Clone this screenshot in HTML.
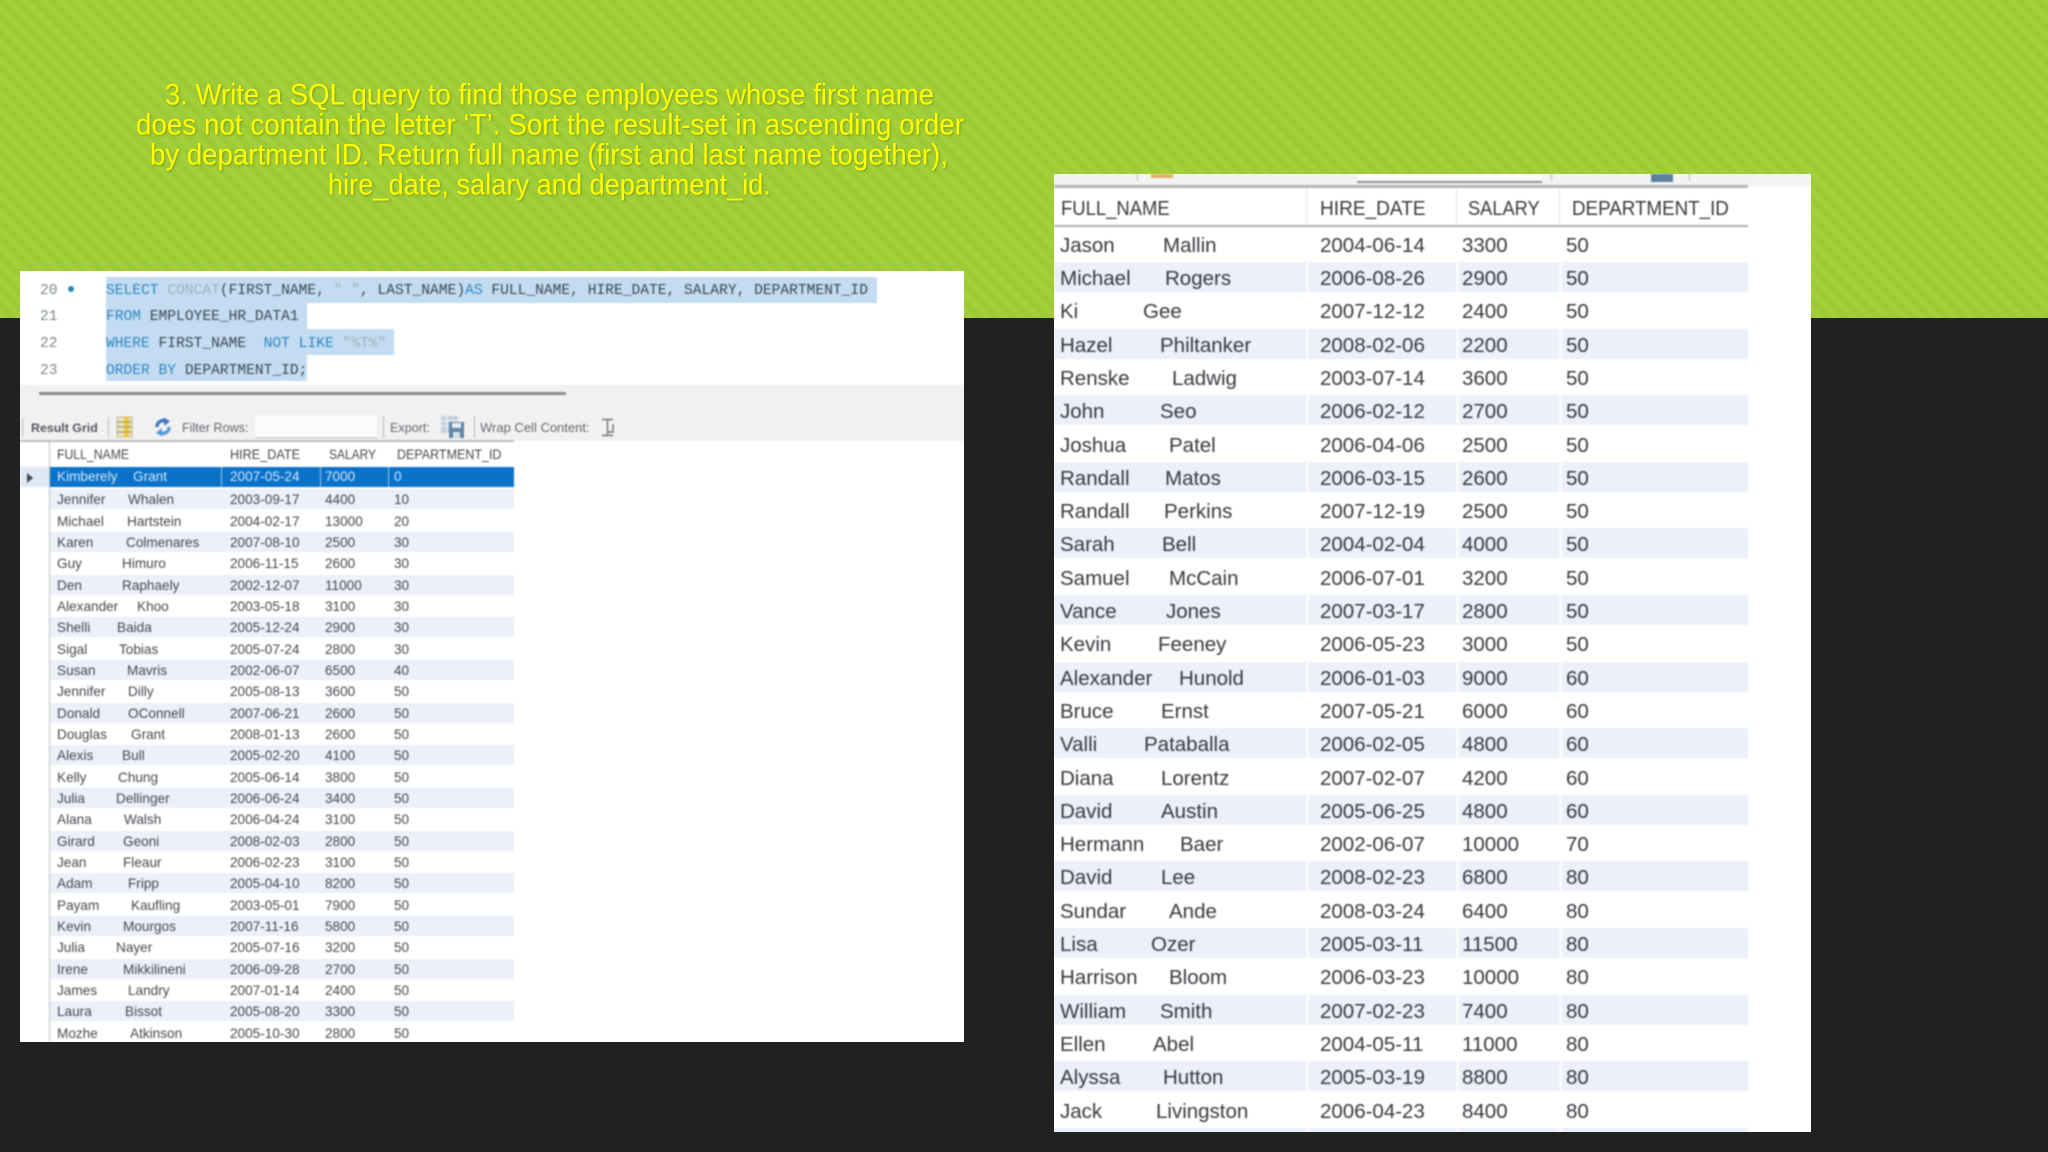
<!DOCTYPE html>
<html lang="en">
<head>
<meta charset="utf-8">
<title>SQL query</title>
<style>
html,body{margin:0;padding:0;width:2048px;height:1152px;overflow:hidden;background:#212121}
body{position:relative;font-family:"Liberation Sans",sans-serif}
.abs,.g{position:absolute}
#green{left:0;top:0;width:2048px;height:318px;background:repeating-linear-gradient(45deg,#a3cf3b 0,#a3cf3b 6px,#9dcb36 6px,#9dcb36 12px)}
#title{left:0;top:0;filter:drop-shadow(1px 1px 1px rgba(70,80,0,.4))}
#title text{font-family:"Liberation Sans",sans-serif;font-size:30px;fill:#ffff00}
.panel{position:absolute;background:#fff;overflow:hidden}
#pl{left:20px;top:271px;width:944px;height:771px}
#pr{left:1054px;top:174px;width:757px;height:958px}
.inner{position:absolute;left:0;top:0;width:2048px;height:1152px;filter:blur(.7px)}
#pl .inner{left:-20px;top:-271px}
#pr .inner{left:-1054px;top:-174px}
.hl{position:absolute;background:#c3dcf2}
.code{position:absolute;left:106px;font:14.6px/26px "Liberation Mono",monospace;color:#3d4750;white-space:pre}
.code b{font-weight:normal;color:#2f86c2}
.code i{font-style:normal;color:#9fb2bd}
.num{position:absolute;left:40px;font:14.6px/26px "Liberation Mono",monospace;color:#7c8488}
.tb{position:absolute;font-size:12.6px;line-height:16px;color:#62676d;white-space:nowrap}
.sep{position:absolute;width:1px;background:#b8b8b8}
.L,.R{position:absolute;left:0;width:2048px}
.L p,.R p{position:relative;margin:0;width:2048px}
.L span,.R span{position:absolute;top:0;white-space:nowrap}
.L{top:468px;font-size:13.6px;color:#44484e}
.L p{height:21.33px;line-height:21.33px;background:linear-gradient(#ebf0f9,#ebf0f9) 50px 0/464px 20px no-repeat}
.L p:nth-child(odd){background:none}
.L p.sel{background:#0b72c9;width:464px;left:50px;height:20px;line-height:20px;margin-top:-1px;margin-bottom:2.33px;color:#d3e6f8}
.L .d{left:230px}.L .s{left:325px}.L .e{left:394px}
.R{top:228.8px;font-size:20.5px;color:#36393e}
.R p{height:33.3px;line-height:33.3px;background:linear-gradient(#ebf0f9,#ebf0f9) 1054px 0/694px 30px no-repeat}
.R p:nth-child(odd){background:none}
.R .n{left:1060px}.R .d{left:1320px}.R .s{left:1462px}.R .e{left:1566px}
.L .n{left:57px}
.vw{position:absolute;background:#fff}
.hd{position:absolute;white-space:nowrap;transform-origin:0 0}
.hl-h{font-size:13.6px;color:#44484e;top:447px}
.hr-h{font-size:20.5px;color:#36393e;top:197px}
</style>
</head>
<body>
<div class="abs" id="green"></div>
<svg class="abs" id="title" width="1040" height="230" viewBox="0 0 1040 230">
<text x="165" y="104.5" textLength="769" lengthAdjust="spacingAndGlyphs">3. Write a SQL query to find those employees whose first name</text>
<text x="136" y="134.5" textLength="828" lengthAdjust="spacingAndGlyphs">does not contain the letter ‘T’. Sort the result-set in ascending order</text>
<text x="150" y="164.5" textLength="798" lengthAdjust="spacingAndGlyphs">by department ID. Return full name (first and last name together),</text>
<text x="328" y="194.5" textLength="443" lengthAdjust="spacingAndGlyphs">hire_date, salary and department_id.</text>
</svg>

<div class="panel" id="pl"><div class="inner">
  <div class="hl" style="left:106px;top:277px;width:771px;height:26px"></div>
  <div class="hl" style="left:106px;top:303px;width:201px;height:26px"></div>
  <div class="hl" style="left:106px;top:329px;width:288px;height:26px"></div>
  <div class="hl" style="left:106px;top:355px;width:201px;height:26px"></div>
  <div class="num" style="top:278px">20</div>
  <div class="abs" style="left:68px;top:286px;width:6px;height:6px;border-radius:50%;background:#2f7fb8"></div>
  <div class="num" style="top:304px">21</div>
  <div class="num" style="top:331px">22</div>
  <div class="num" style="top:358px">23</div>
  <div class="code" style="top:278px"><b>SELECT</b> <i>CONCAT</i>(FIRST_NAME, <i>" "</i>, LAST_NAME)<b>AS</b> FULL_NAME, HIRE_DATE, SALARY, DEPARTMENT_ID</div>
  <div class="code" style="top:304px"><b>FROM</b> EMPLOYEE_HR_DATA1</div>
  <div class="code" style="top:331px"><b>WHERE</b> FIRST_NAME  <b>NOT LIKE</b> <i>"%T%"</i></div>
  <div class="code" style="top:358px"><b>ORDER BY</b> DEPARTMENT_ID;</div>

  <div class="abs" style="left:20px;top:385px;width:944px;height:56px;background:#f1f1f1"></div>
  <div class="abs" style="left:39px;top:392px;width:527px;height:3px;background:#8d8d8d"></div>
  <div class="sep" style="left:22px;top:417px;height:20px"></div>
  <div class="tb" style="left:31px;top:420px;font-weight:bold;color:#53575c;font-size:12.4px">Result Grid</div>
  <div class="sep" style="left:108px;top:417px;height:20px"></div>
  <svg class="abs" style="left:116px;top:416px" width="18" height="22" viewBox="0 0 18 22"><rect x="1" y="1" width="15" height="20" fill="#e9e3bd" stroke="#c5bd90"/><rect x="8" y="1" width="5" height="20" fill="#f5c93a"/><path d="M1 6h15M1 11h15M1 16h15" stroke="#8f8f70" stroke-width="1"/></svg>
  <svg class="abs" style="left:152px;top:416px" width="22" height="22" viewBox="0 0 22 22"><path d="M5 11 A6 6 0 0 1 14 5.5" fill="none" stroke="#3b78c4" stroke-width="3.4"/><path d="M11.5 1.5 L18 5 L12.5 10Z" fill="#3b78c4"/><path d="M17 11 A6 6 0 0 1 8 16.5" fill="none" stroke="#5b97d8" stroke-width="3.4"/><path d="M10.5 20.5 L4 17 L9.5 12Z" fill="#5b97d8"/></svg>
  <div class="tb" style="left:182px;top:420px">Filter Rows:</div>
  <div class="abs" style="left:255px;top:415px;width:122px;height:22px;background:#fbfbfb;border-bottom:1px solid #c4c4c4"></div>
  <div class="sep" style="left:383px;top:416px;height:22px"></div>
  <div class="tb" style="left:390px;top:420px">Export:</div>
  <svg class="abs" style="left:440px;top:415px" width="26" height="24" viewBox="0 0 26 24"><rect x="1" y="1" width="17" height="17" fill="#c5d2dd"/><path d="M1 6h17M1 11h17M7 1v17" stroke="#eef3f7"/><rect x="9" y="7" width="15" height="16" fill="#5f87a8"/><rect x="12" y="8" width="9" height="5" fill="#e6edf3"/><rect x="13" y="17" width="7" height="6" fill="#d5e0ea"/></svg>
  <div class="sep" style="left:474px;top:416px;height:22px"></div>
  <div class="tb" style="left:480px;top:420px;font-size:13px">Wrap Cell Content:</div>
  <svg class="abs" style="left:600px;top:418px" width="16" height="19" viewBox="0 0 16 19"><path d="M2 1.5h11M7.5 1.5v15M2 17.5h11M13 6v8h-5" fill="none" stroke="#6d7278" stroke-width="1.4"/></svg>
  <div class="abs" style="left:20px;top:440px;width:494px;height:2px;background:#bcbcbc"></div>

  <div class="hd hl-h" style="left:57px;transform:scaleX(.9)">FULL_NAME</div>
  <div class="hd hl-h" style="left:230px;transform:scaleX(.93)">HIRE_DATE</div>
  <div class="hd hl-h" style="left:329px;transform:scaleX(.88)">SALARY</div>
  <div class="hd hl-h" style="left:397px;transform:scaleX(.92)">DEPARTMENT_ID</div>

  <div class="abs" style="left:20px;top:467px;width:30px;height:20px;background:#dfe9f5"></div>
  <div class="abs" style="left:27px;top:473px;width:0;height:0;border-left:6px solid #3f4a55;border-top:5px solid transparent;border-bottom:5px solid transparent"></div>

  <div class="L">
    <p class="sel"><span style="left:7px">Kimberely</span><span style="left:83px">Grant</span><span style="left:180px">2007-05-24</span><span style="left:275px">7000</span><span style="left:344px">0</span></p>
    <p><span class="n">Jennifer</span><span style="left:128px">Whalen</span><span class="d">2003-09-17</span><span class="s">4400</span><span class="e">10</span></p>
    <p><span class="n">Michael</span><span style="left:127px">Hartstein</span><span class="d">2004-02-17</span><span class="s">13000</span><span class="e">20</span></p>
    <p><span class="n">Karen</span><span style="left:126px">Colmenares</span><span class="d">2007-08-10</span><span class="s">2500</span><span class="e">30</span></p>
    <p><span class="n">Guy</span><span style="left:122px">Himuro</span><span class="d">2006-11-15</span><span class="s">2600</span><span class="e">30</span></p>
    <p><span class="n">Den</span><span style="left:122px">Raphaely</span><span class="d">2002-12-07</span><span class="s">11000</span><span class="e">30</span></p>
    <p><span class="n">Alexander</span><span style="left:137px">Khoo</span><span class="d">2003-05-18</span><span class="s">3100</span><span class="e">30</span></p>
    <p><span class="n">Shelli</span><span style="left:117px">Baida</span><span class="d">2005-12-24</span><span class="s">2900</span><span class="e">30</span></p>
    <p><span class="n">Sigal</span><span style="left:119px">Tobias</span><span class="d">2005-07-24</span><span class="s">2800</span><span class="e">30</span></p>
    <p><span class="n">Susan</span><span style="left:127px">Mavris</span><span class="d">2002-06-07</span><span class="s">6500</span><span class="e">40</span></p>
    <p><span class="n">Jennifer</span><span style="left:128px">Dilly</span><span class="d">2005-08-13</span><span class="s">3600</span><span class="e">50</span></p>
    <p><span class="n">Donald</span><span style="left:128px">OConnell</span><span class="d">2007-06-21</span><span class="s">2600</span><span class="e">50</span></p>
    <p><span class="n">Douglas</span><span style="left:131px">Grant</span><span class="d">2008-01-13</span><span class="s">2600</span><span class="e">50</span></p>
    <p><span class="n">Alexis</span><span style="left:122px">Bull</span><span class="d">2005-02-20</span><span class="s">4100</span><span class="e">50</span></p>
    <p><span class="n">Kelly</span><span style="left:118px">Chung</span><span class="d">2005-06-14</span><span class="s">3800</span><span class="e">50</span></p>
    <p><span class="n">Julia</span><span style="left:116px">Dellinger</span><span class="d">2006-06-24</span><span class="s">3400</span><span class="e">50</span></p>
    <p><span class="n">Alana</span><span style="left:124px">Walsh</span><span class="d">2006-04-24</span><span class="s">3100</span><span class="e">50</span></p>
    <p><span class="n">Girard</span><span style="left:123px">Geoni</span><span class="d">2008-02-03</span><span class="s">2800</span><span class="e">50</span></p>
    <p><span class="n">Jean</span><span style="left:123px">Fleaur</span><span class="d">2006-02-23</span><span class="s">3100</span><span class="e">50</span></p>
    <p><span class="n">Adam</span><span style="left:128px">Fripp</span><span class="d">2005-04-10</span><span class="s">8200</span><span class="e">50</span></p>
    <p><span class="n">Payam</span><span style="left:131px">Kaufling</span><span class="d">2003-05-01</span><span class="s">7900</span><span class="e">50</span></p>
    <p><span class="n">Kevin</span><span style="left:123px">Mourgos</span><span class="d">2007-11-16</span><span class="s">5800</span><span class="e">50</span></p>
    <p><span class="n">Julia</span><span style="left:116px">Nayer</span><span class="d">2005-07-16</span><span class="s">3200</span><span class="e">50</span></p>
    <p><span class="n">Irene</span><span style="left:123px">Mikkilineni</span><span class="d">2006-09-28</span><span class="s">2700</span><span class="e">50</span></p>
    <p><span class="n">James</span><span style="left:128px">Landry</span><span class="d">2007-01-14</span><span class="s">2400</span><span class="e">50</span></p>
    <p><span class="n">Laura</span><span style="left:125px">Bissot</span><span class="d">2005-08-20</span><span class="s">3300</span><span class="e">50</span></p>
    <p><span class="n">Mozhe</span><span style="left:130px">Atkinson</span><span class="d">2005-10-30</span><span class="s">2800</span><span class="e">50</span></p>
  </div>
  <div class="abs" style="left:49px;top:442px;width:1px;height:600px;background:#c4c4c4"></div>
  <div class="abs" style="left:221px;top:467px;width:1px;height:20px;background:#9cc6ea"></div>
  <div class="abs" style="left:320px;top:467px;width:1px;height:20px;background:#9cc6ea"></div>
  <div class="abs" style="left:388px;top:467px;width:1px;height:20px;background:#9cc6ea"></div>
</div></div>

<div class="panel" id="pr"><div class="inner">
  <div class="abs" style="left:1054px;top:174px;width:757px;height:12px;background:#f3f3f3"></div>
  <div class="abs" style="left:1151px;top:174px;width:22px;height:4px;background:#dfae6a"></div>
  <div class="abs" style="left:1357px;top:174px;width:185px;height:7px;background:#fbfbfb;border-bottom:2px solid #8f8f8f"></div>
  <div class="abs" style="left:1651px;top:174px;width:22px;height:8px;background:#5a7f9f"></div>
  <div class="sep" style="left:1137px;top:174px;height:7px"></div>
  <div class="sep" style="left:1551px;top:174px;height:7px"></div>
  <div class="sep" style="left:1689px;top:174px;height:7px"></div>
  <div class="abs" style="left:1054px;top:185px;width:694px;height:3px;background:#b5b5b5"></div>
  <div class="abs" style="left:1054px;top:225px;width:694px;height:2px;background:#b0b0b0"></div>
  <div class="hd hr-h" style="left:1061px;transform:scaleX(.9)">FULL_NAME</div>
  <div class="hd hr-h" style="left:1320px;transform:scaleX(.93)">HIRE_DATE</div>
  <div class="hd hr-h" style="left:1468px;transform:scaleX(.89)">SALARY</div>
  <div class="hd hr-h" style="left:1572px;transform:scaleX(.916)">DEPARTMENT_ID</div>
  <div class="R">
    <p><span class="n">Jason</span><span style="left:1163px">Mallin</span><span class="d">2004-06-14</span><span class="s">3300</span><span class="e">50</span></p>
    <p><span class="n">Michael</span><span style="left:1165px">Rogers</span><span class="d">2006-08-26</span><span class="s">2900</span><span class="e">50</span></p>
    <p><span class="n">Ki</span><span style="left:1143px">Gee</span><span class="d">2007-12-12</span><span class="s">2400</span><span class="e">50</span></p>
    <p><span class="n">Hazel</span><span style="left:1160px">Philtanker</span><span class="d">2008-02-06</span><span class="s">2200</span><span class="e">50</span></p>
    <p><span class="n">Renske</span><span style="left:1172px">Ladwig</span><span class="d">2003-07-14</span><span class="s">3600</span><span class="e">50</span></p>
    <p><span class="n">John</span><span style="left:1160px">Seo</span><span class="d">2006-02-12</span><span class="s">2700</span><span class="e">50</span></p>
    <p><span class="n">Joshua</span><span style="left:1169px">Patel</span><span class="d">2006-04-06</span><span class="s">2500</span><span class="e">50</span></p>
    <p><span class="n">Randall</span><span style="left:1165px">Matos</span><span class="d">2006-03-15</span><span class="s">2600</span><span class="e">50</span></p>
    <p><span class="n">Randall</span><span style="left:1164px">Perkins</span><span class="d">2007-12-19</span><span class="s">2500</span><span class="e">50</span></p>
    <p><span class="n">Sarah</span><span style="left:1162px">Bell</span><span class="d">2004-02-04</span><span class="s">4000</span><span class="e">50</span></p>
    <p><span class="n">Samuel</span><span style="left:1169px">McCain</span><span class="d">2006-07-01</span><span class="s">3200</span><span class="e">50</span></p>
    <p><span class="n">Vance</span><span style="left:1166px">Jones</span><span class="d">2007-03-17</span><span class="s">2800</span><span class="e">50</span></p>
    <p><span class="n">Kevin</span><span style="left:1158px">Feeney</span><span class="d">2006-05-23</span><span class="s">3000</span><span class="e">50</span></p>
    <p><span class="n">Alexander</span><span style="left:1179px">Hunold</span><span class="d">2006-01-03</span><span class="s">9000</span><span class="e">60</span></p>
    <p><span class="n">Bruce</span><span style="left:1161px">Ernst</span><span class="d">2007-05-21</span><span class="s">6000</span><span class="e">60</span></p>
    <p><span class="n">Valli</span><span style="left:1144px">Pataballa</span><span class="d">2006-02-05</span><span class="s">4800</span><span class="e">60</span></p>
    <p><span class="n">Diana</span><span style="left:1161px">Lorentz</span><span class="d">2007-02-07</span><span class="s">4200</span><span class="e">60</span></p>
    <p><span class="n">David</span><span style="left:1161px">Austin</span><span class="d">2005-06-25</span><span class="s">4800</span><span class="e">60</span></p>
    <p><span class="n">Hermann</span><span style="left:1180px">Baer</span><span class="d">2002-06-07</span><span class="s">10000</span><span class="e">70</span></p>
    <p><span class="n">David</span><span style="left:1161px">Lee</span><span class="d">2008-02-23</span><span class="s">6800</span><span class="e">80</span></p>
    <p><span class="n">Sundar</span><span style="left:1169px">Ande</span><span class="d">2008-03-24</span><span class="s">6400</span><span class="e">80</span></p>
    <p><span class="n">Lisa</span><span style="left:1151px">Ozer</span><span class="d">2005-03-11</span><span class="s">11500</span><span class="e">80</span></p>
    <p><span class="n">Harrison</span><span style="left:1169px">Bloom</span><span class="d">2006-03-23</span><span class="s">10000</span><span class="e">80</span></p>
    <p><span class="n">William</span><span style="left:1160px">Smith</span><span class="d">2007-02-23</span><span class="s">7400</span><span class="e">80</span></p>
    <p><span class="n">Ellen</span><span style="left:1153px">Abel</span><span class="d">2004-05-11</span><span class="s">11000</span><span class="e">80</span></p>
    <p><span class="n">Alyssa</span><span style="left:1163px">Hutton</span><span class="d">2005-03-19</span><span class="s">8800</span><span class="e">80</span></p>
    <p><span class="n">Jack</span><span style="left:1156px">Livingston</span><span class="d">2006-04-23</span><span class="s">8400</span><span class="e">80</span></p>
    <p></p>
  </div>
  <div class="vw" style="left:1306px;top:227px;width:3px;height:910px;opacity:.7"></div>
  <div class="vw" style="left:1456px;top:227px;width:3px;height:910px;opacity:.7"></div>
  <div class="vw" style="left:1559px;top:227px;width:3px;height:910px;opacity:.7"></div>
  <div class="abs" style="left:1306px;top:188px;width:1px;height:37px;background:#e4e4e4"></div>
  <div class="abs" style="left:1456px;top:188px;width:1px;height:37px;background:#e4e4e4"></div>
  <div class="abs" style="left:1559px;top:188px;width:1px;height:37px;background:#e4e4e4"></div>
</div></div>
</body>
</html>
